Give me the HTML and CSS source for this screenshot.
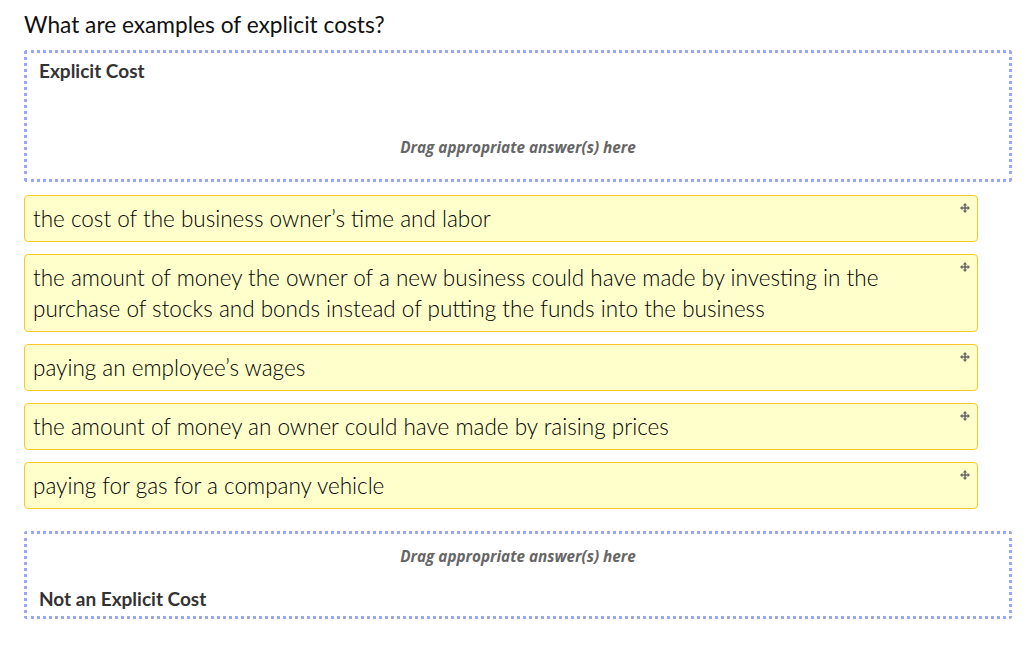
FILE: index.html
```html
<!DOCTYPE html>
<html>
<head>
<meta charset="utf-8">
<link rel="stylesheet" href="styles.css">
</head>
<body>
<div class="page">
  <h1 class="question">What are examples of explicit costs?</h1>
  <div class="zone zone-top">
    <div class="zone-label">Explicit Cost</div>
    <div class="zone-hint">Drag appropriate answer(s) here</div>
  </div>
  <div class="items">
    <div class="item"><span class="item-text">the cost of the business owner’s time and labor</span><svg class="move" viewBox="0 0 10 10"><path d="M5 1.5V8.5M1.5 5H8.5" /><path class="head" d="M5 0L2.8 2.4H7.2ZM5 10L2.8 7.6H7.2ZM0 5L2.4 2.8V7.2ZM10 5L7.6 2.8V7.2Z" /></svg></div>
    <div class="item"><span class="item-text">the amount of money the owner of a new business could have made by investing in the purchase of stocks and bonds instead of putting the funds into the business</span><svg class="move" viewBox="0 0 10 10"><path d="M5 1.5V8.5M1.5 5H8.5" /><path class="head" d="M5 0L2.8 2.4H7.2ZM5 10L2.8 7.6H7.2ZM0 5L2.4 2.8V7.2ZM10 5L7.6 2.8V7.2Z" /></svg></div>
    <div class="item"><span class="item-text">paying an employee’s wages</span><svg class="move" viewBox="0 0 10 10"><path d="M5 1.5V8.5M1.5 5H8.5" /><path class="head" d="M5 0L2.8 2.4H7.2ZM5 10L2.8 7.6H7.2ZM0 5L2.4 2.8V7.2ZM10 5L7.6 2.8V7.2Z" /></svg></div>
    <div class="item"><span class="item-text">the amount of money an owner could have made by raising prices</span><svg class="move" viewBox="0 0 10 10"><path d="M5 1.5V8.5M1.5 5H8.5" /><path class="head" d="M5 0L2.8 2.4H7.2ZM5 10L2.8 7.6H7.2ZM0 5L2.4 2.8V7.2ZM10 5L7.6 2.8V7.2Z" /></svg></div>
    <div class="item"><span class="item-text">paying for gas for a company vehicle</span><svg class="move" viewBox="0 0 10 10"><path d="M5 1.5V8.5M1.5 5H8.5" /><path class="head" d="M5 0L2.8 2.4H7.2ZM5 10L2.8 7.6H7.2ZM0 5L2.4 2.8V7.2ZM10 5L7.6 2.8V7.2Z" /></svg></div>
  </div>
  <div class="zone zone-bottom">
    <div class="zone-hint">Drag appropriate answer(s) here</div>
    <div class="zone-label">Not an Explicit Cost</div>
  </div>
</div>
</body>
</html>
```
FILE: styles.css
```css
html, body {
  margin: 0;
  padding: 0;
  background: #fff;
}
body {
  font-family: "Lato", "Open Sans", sans-serif;
  color: #222;
}
.page {
  padding: 10px 12px 0 24px;
  width: 988px;
}
.question {
  margin: 0;
  font-size: 22.7px;
  font-weight: 400;
  line-height: 30px;
  color: #111;
}
.zone {
  border: 3px dotted #98a6fb;
  border-radius: 3px;
  display: flex;
  flex-direction: column;
  box-sizing: border-box;
  padding-left: 12px;
  padding-right: 12px;
}
.zone-top {
  margin-top: 10px;
  height: 132px;
  padding-top: 7px;
}
.zone-bottom {
  margin-top: 22px;
  height: 88px;
  padding-top: 13px;
}
.zone-label {
  font-size: 19px;
  font-weight: 700;
  color: #333;
  line-height: 22px;
}
.zone-hint {
  font-family: "Open Sans", sans-serif;
  font-size: 15.3px;
  font-weight: 700;
  font-style: italic;
  color: #666;
  text-align: center;
  line-height: 18px;
}
.zone-top .zone-hint {
  margin-top: 56px;
}
.zone-bottom .zone-hint {
  margin-bottom: 23px;
}
.items {
  margin-top: 13px;
  display: flex;
  flex-direction: column;
  gap: 12px;
  width: 954px;
}
.item {
  display: flex;
  justify-content: space-between;
  align-items: flex-start;
  background: #ffffcc;
  border: 1px solid #f9c72b;
  border-radius: 4px;
  padding: 7px 7px 7px 8px;
}
.item-text {
  font-size: 22.5px;
  font-weight: 300;
  line-height: 31px;
  color: #000;
  max-width: 880px;
}
.move {
  width: 10px;
  height: 10px;
  margin-top: 0;
  flex: none;
}
.move path {
  stroke: #666;
  stroke-width: 1.5;
  fill: none;
}
.move path.head {
  stroke: none;
  fill: #666;
}
```
